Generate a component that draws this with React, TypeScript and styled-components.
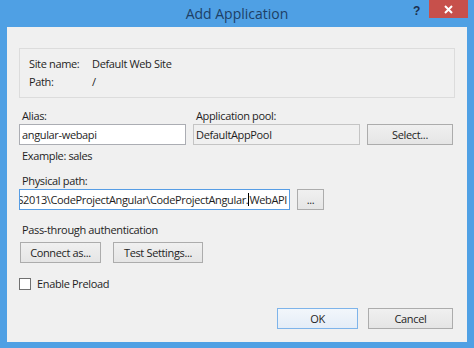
import styled, { createGlobalStyle } from "styled-components";

const GlobalStyle = createGlobalStyle`
  html, body {
    margin: 0;
    padding: 0;
  }
  body {
    font-family: "Open Sans", "Noto Sans", sans-serif;
    font-size: 11px;
    letter-spacing: -0.35px;
    color: #1e1e1e;
  }
`;

export default function App() {
  return (
    <>
      <GlobalStyle />
      <Window>
        <TitleBar>
          <span />
          <Title>Add Application</Title>
          <Controls>
            <HelpButton>?</HelpButton>
            <CloseButton>
              <svg width="9" height="9" viewBox="0 0 9 9">
                <path d="M1 1 L8 8 M8 1 L1 8" stroke="#fff" strokeWidth="2" />
              </svg>
            </CloseButton>
          </Controls>
        </TitleBar>

        <Client>
          <GroupBox>
            <InfoRow>
              <InfoLabel>Site name:</InfoLabel>
              <span>Default Web Site</span>
            </InfoRow>
            <InfoRow>
              <InfoLabel>Path:</InfoLabel>
              <span>/</span>
            </InfoRow>
          </GroupBox>

          <FieldRow $top={10}>
            <Field $width={167}>
              <Label>Alias:</Label>
              <TextBox>angular-webapi</TextBox>
            </Field>
            <Field $width={167}>
              <Label>Application pool:</Label>
              <TextBox $readOnly>DefaultAppPool</TextBox>
            </Field>
            <Button $width={86}>Select...</Button>
          </FieldRow>
          <Hint>Example: sales</Hint>

          <Label $top={8}>Physical path:</Label>
          <FieldRow $top={0}>
            <TextBox $focused $width={271}>
              <ScrollText>
                VS2013\CodeProjectAngular\CodeProjectAngular.<Caret />WebAPI
              </ScrollText>
            </TextBox>
            <Button $width={27}>...</Button>
          </FieldRow>

          <Label $top={12}>Pass-through authentication</Label>
          <ButtonRow>
            <Button $width={81}>Connect as...</Button>
            <Button $width={90}>Test Settings...</Button>
          </ButtonRow>

          <CheckRow>
            <CheckBox />
            <span>Enable Preload</span>
          </CheckRow>

          <Footer>
            <Button $width={81} $default>
              OK
            </Button>
            <Button $width={85}>Cancel</Button>
          </Footer>
        </Client>
      </Window>
    </>
  );
}

const Window = styled.div`
  width: 474px;
  height: 348px;
  background: #4fa0e4;
  display: flex;
  flex-direction: column;
  box-sizing: border-box;
`;

const TitleBar = styled.div`
  height: 27px;
  display: grid;
  grid-template-columns: 1fr auto 1fr;
  align-items: start;
`;

const Title = styled.div`
  font-size: 14px;
  letter-spacing: 0;
  color: #1d3f66;
  line-height: 28px;
`;

const Controls = styled.div`
  display: flex;
  justify-content: flex-end;
  align-items: flex-start;
  padding-right: 6px;
`;

const HelpButton = styled.div`
  font-family: "Liberation Sans", sans-serif;
  font-weight: bold;
  font-size: 12px;
  color: #1b2f4d;
  margin: 4px 9px 0 0;
`;

const CloseButton = styled.div`
  width: 39px;
  height: 18px;
  background: #c7504b;
  display: flex;
  align-items: center;
  justify-content: center;
`;

const Client = styled.div`
  flex: 1;
  margin: 0 7px 6px 7px;
  background: #f0f0f0;
  padding: 21px 12px 0 12px;
  display: flex;
  flex-direction: column;
  align-items: flex-start;
`;

const GroupBox = styled.div`
  width: 436px;
  height: 50px;
  box-sizing: border-box;
  border: 1px solid #dcdcdc;
  padding: 6px 0 0 9px;
`;

const InfoRow = styled.div`
  display: flex;
  line-height: 18px;
`;

const InfoLabel = styled.span`
  width: 63px;
`;

const FieldRow = styled.div<{ $top: number }>`
  display: flex;
  align-items: flex-end;
  gap: 7px;
  margin-top: ${(p) => p.$top}px;
`;

const Field = styled.div<{ $width: number }>`
  width: ${(p) => p.$width}px;
  display: flex;
  flex-direction: column;
`;

const Label = styled.div<{ $top?: number }>`
  line-height: 16px;
  padding-left: 3px;
  margin-top: ${(p) => p.$top ?? 0}px;
`;

const Hint = styled(Label)`
  line-height: 18px;
  margin-top: 2px;
`;

const TextBox = styled.div<{ $readOnly?: boolean; $focused?: boolean; $width?: number }>`
  height: 21px;
  ${(p) => (p.$width ? `width: ${p.$width}px;` : "")}
  box-sizing: border-box;
  border: 1px solid ${(p) => (p.$focused ? "#569de5" : p.$readOnly ? "#c4c4c4" : "#abadb3")};
  background: ${(p) => (p.$readOnly ? "#f0f0f0" : "#ffffff")};
  padding: 0 2px;
  line-height: 19px;
  white-space: nowrap;
  overflow: hidden;
  display: flex;
  justify-content: ${(p) => (p.$focused ? "flex-end" : "flex-start")};
`;

const ScrollText = styled.span`
  flex-shrink: 0;
`;

const Caret = styled.span`
  display: inline-block;
  width: 1px;
  height: 13px;
  background: #000;
  vertical-align: -2px;
`;

const Button = styled.div<{ $width: number; $default?: boolean }>`
  width: ${(p) => p.$width}px;
  height: 21px;
  box-sizing: border-box;
  border: 1px solid ${(p) => (p.$default ? "#7eb4ea" : "#acacac")};
  background: ${(p) =>
    p.$default ? "linear-gradient(#f2f6fb, #e4edf7)" : "linear-gradient(#f0f0f0, #e5e5e5)"};
  display: flex;
  align-items: center;
  justify-content: center;
`;

const ButtonRow = styled.div`
  display: flex;
  gap: 12px;
  margin-top: 4px;
  margin-left: 1px;
`;

const CheckRow = styled.div`
  display: flex;
  align-items: center;
  gap: 6px;
  margin-top: 13px;
  line-height: 16px;
`;

const CheckBox = styled.div`
  width: 12px;
  height: 12px;
  box-sizing: border-box;
  border: 1px solid #707070;
  background: #fff;
`;

const Footer = styled.div`
  align-self: flex-end;
  display: flex;
  gap: 10px;
  margin-top: 16px;
  margin-right: 2px;
`;
